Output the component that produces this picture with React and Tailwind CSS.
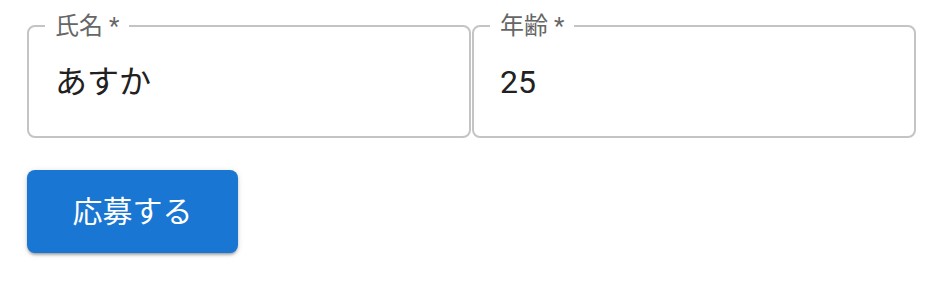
export default function App() {
  const font = { fontFamily: '"Roboto", "Noto Sans CJK JP", sans-serif' };
  return (
    <div className="bg-white w-[946px] h-[284px]" style={font}>
      <div className="pl-[27px] pt-[13px]">
        <div className="grid grid-cols-2 gap-px w-[889px]">
          {[
            { label: "氏名 *", value: "あすか" },
            { label: "年齢 *", value: "25" },
          ].map((f) => (
            <fieldset
              key={f.label}
              className="border-2 border-[#c4c4c4] rounded-lg h-[125px] pl-[16px] pr-[16px] m-0"
            >
              <legend className="px-[10px] text-[24px] leading-[26px] text-[#666666]">
                {f.label}
              </legend>
              <div className="pl-[10px] pt-[20px] text-[32px] leading-[46px] text-[#212121]">
                {f.value}
              </div>
            </fieldset>
          ))}
        </div>
        <button className="mt-[32px] w-[211px] h-[83px] rounded-lg bg-[#1976d2] text-white text-[30px] font-normal shadow-[0px_3px_3px_-2px_rgba(0,0,0,0.25),0px_2px_3px_0px_rgba(0,0,0,0.16),0px_1px_6px_0px_rgba(0,0,0,0.12)]">
          応募する
        </button>
      </div>
    </div>
  );
}
